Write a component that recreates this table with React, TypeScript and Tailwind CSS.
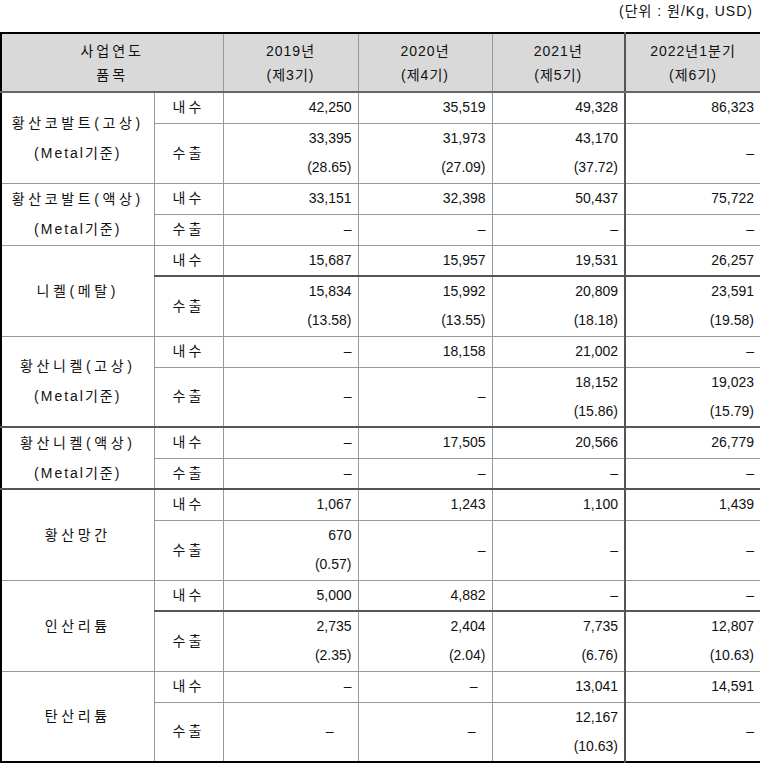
type Cell = string | [string, string]

type Group = {
  name: string[]
  inner: Cell[]
  export: Cell[]
  exportTall: boolean
  splitThick?: boolean
  topThick?: boolean
  exportPad?: string[]
  innerPad?: string[]
}

const groups: Group[] = [
  {
    name: ['황산코발트(고상)', '(Metal기준)'],
    inner: ['42,250', '35,519', '49,328', '86,323'],
    export: [['33,395', '(28.65)'], ['31,973', '(27.09)'], ['43,170', '(37.72)'], '–'],
    exportTall: true,
  },
  {
    name: ['황산코발트(액상)', '(Metal기준)'],
    inner: ['33,151', '32,398', '50,437', '75,722'],
    export: ['–', '–', '–', '–'],
    exportTall: false,
  },
  {
    name: ['니켈(메탈)'],
    inner: ['15,687', '15,957', '19,531', '26,257'],
    export: [['15,834', '(13.58)'], ['15,992', '(13.55)'], ['20,809', '(18.18)'], ['23,591', '(19.58)']],
    exportTall: true,
    splitThick: true,
  },
  {
    name: ['황산니켈(고상)', '(Metal기준)'],
    inner: ['–', '18,158', '21,002', '–'],
    export: ['–', '–', ['18,152', '(15.86)'], ['19,023', '(15.79)']],
    exportTall: true,
  },
  {
    name: ['황산니켈(액상)', '(Metal기준)'],
    inner: ['–', '17,505', '20,566', '26,779'],
    export: ['–', '–', '–', '–'],
    exportTall: false,
    topThick: true,
  },
  {
    name: ['황산망간'],
    inner: ['1,067', '1,243', '1,100', '1,439'],
    export: [['670', '(0.57)'], '–', '–', '–'],
    exportTall: true,
    topThick: true,
  },
  {
    name: ['인산리튬'],
    inner: ['5,000', '4,882', '–', '–'],
    export: [['2,735', '(2.35)'], ['2,404', '(2.04)'], ['7,735', '(6.76)'], ['12,807', '(10.63)']],
    exportTall: true,
    splitThick: true,
  },
  {
    name: ['탄산리튬'],
    inner: ['–', '–', '13,041', '14,591'],
    export: ['–', '–', ['12,167', '(10.63)'], '–'],
    exportTall: true,
    innerPad: ['pr-[6px]', 'pr-[14px]', 'pr-[6px]', 'pr-[6px]'],
    exportPad: ['pr-[24px]', 'pr-[16px]', 'pr-[6px]', 'pr-[6px]'],
  },
]

const td = 'border border-[#999] align-middle p-0'

function NumCell({ v, thick, last, pad }: { v: Cell; thick?: boolean; last: boolean; pad?: string }) {
  return (
    <td
      className={`${td} text-right ${pad ?? 'pr-[6px]'} leading-[29px] ${thick ? 'border-t-2 border-t-[#555]' : ''} ${last ? 'border-l-2 border-l-[#555]' : ''}`}
    >
      {Array.isArray(v) ? (
        <>
          <div>{v[0]}</div>
          <div>{v[1]}</div>
        </>
      ) : (
        v
      )}
    </td>
  )
}

export default function App() {
  return (
    <div className="w-[760px] bg-white text-[14px] text-[#111] font-['Liberation_Sans','Noto_Sans_CJK_KR',sans-serif]">
      <div className="h-[32px] pr-[7px] pt-[1px] text-right tracking-[1px]">(단위 : 원/Kg, USD)</div>
      <table className="w-[760px] table-fixed border-collapse border-2 border-black">
        <colgroup>
          <col className="w-[153px]" />
          <col className="w-[69px]" />
          <col className="w-[135px]" />
          <col className="w-[134px]" />
          <col className="w-[133px]" />
          <col className="w-[136px]" />
        </colgroup>
        <thead>
          <tr className="h-[59px] bg-[#d9d9d9] leading-[24px]">
            <th colSpan={2} className="border border-[#999] border-b-2 border-b-[#666] p-0 font-normal tracking-[3px]">
              <div>사업연도</div>
              <div>품목</div>
            </th>
            {[
              ['2019년', '(제3기)'],
              ['2020년', '(제4기)'],
              ['2021년', '(제5기)'],
              ['2022년1분기', '(제6기)'],
            ].map((h, i) => (
              <th
                key={h[0]}
                className={`border border-[#999] border-b-2 border-b-[#666] p-0 font-normal tracking-[1px] ${i === 3 ? 'border-l-2 border-l-[#555]' : ''}`}
              >
                <div>{h[0]}</div>
                <div>{h[1]}</div>
              </th>
            ))}
          </tr>
        </thead>
        <tbody>
          {groups.map((g) => (
            <>
              <tr key={g.name[0] + 'a'} className="h-[31px]">
                <td
                  rowSpan={2}
                  className={`${td} text-center leading-[30px] ${g.topThick ? 'border-t-2 border-t-[#555]' : ''}`}
                >
                  {g.name.map((n, k) => (
                    <div key={n} className={k === 0 ? 'tracking-[3.6px]' : 'tracking-[2px]'}>
                      {n}
                    </div>
                  ))}
                </td>
                <td className={`${td} text-center tracking-[3px] ${g.topThick ? 'border-t-2 border-t-[#555]' : ''}`}>내수</td>
                {g.inner.map((v, i) => (
                  <NumCell key={i} v={v} thick={g.topThick} last={i === 3} pad={g.innerPad?.[i]} />
                ))}
              </tr>
              <tr key={g.name[0] + 'b'} className={g.exportTall ? 'h-[60px]' : 'h-[31px]'}>
                <td className={`${td} text-center tracking-[3px] ${g.splitThick ? 'border-t-2 border-t-[#555]' : ''}`}>수출</td>
                {g.export.map((v, i) => (
                  <NumCell key={i} v={v} thick={g.splitThick} last={i === 3} pad={g.exportPad?.[i]} />
                ))}
              </tr>
            </>
          ))}
        </tbody>
      </table>
    </div>
  )
}
